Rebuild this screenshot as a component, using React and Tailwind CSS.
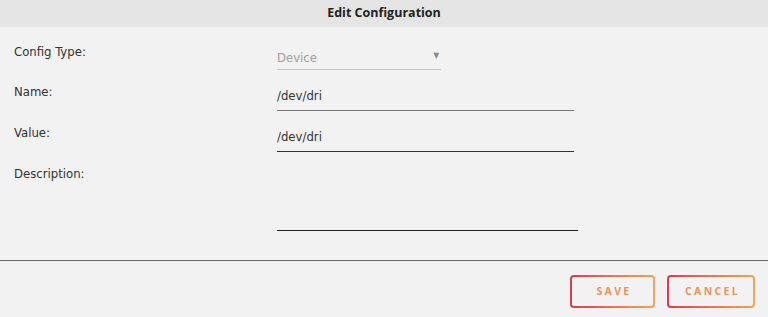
import React from "react";

const font = { fontFamily: '"Liberation Sans Narrow", "DejaVu Sans Condensed", "Roboto", sans-serif' };

function Row({ label, children, h }) {
  return (
    <div className={`flex ${h}`}>
      <div className="-mt-[1px] w-[277px] pl-[14px] text-[13px] text-[#333]">{label}</div>
      <div className="flex-1">{children}</div>
    </div>
  );
}

function Btn({ children, w }) {
  return (
    <div className={`rounded-[4px] bg-gradient-to-r from-[#d53c4c] to-[#f4a550] p-[2px] ${w} h-[33px]`}>
      <div className="flex h-full w-full items-center justify-center rounded-[2px] bg-[#f2f2f2] pl-[3px] text-[10.5px] font-bold tracking-[0.22em] text-[#eb9460]" style={{ fontFamily: '"Open Sans", sans-serif' }}>
        {children}
      </div>
    </div>
  );
}

export default function App() {
  return (
    <div className="h-[317px] w-[768px] bg-[#f2f2f2]" style={font}>
      <div className="flex h-[27px] items-center justify-center bg-[#e5e5e5] text-[12.5px] font-bold text-[#222]" style={{ fontFamily: '"Open Sans", sans-serif' }}>
        Edit Configuration
      </div>
      <div className="pt-[16px]">
        <Row label="Config Type:" h="h-[40px]">
          <div className="flex h-[27px] w-[164px] items-center justify-between border-b border-[#c8c8c8] pr-[2px] text-[13px] text-[#a0a0a0]">
            <span className="pt-[4px]">Device</span>
            <span className="text-[8px] text-[#888]">▼</span>
          </div>
        </Row>
        <Row label="Name:" h="h-[41px]">
          <div className="flex h-[28px] w-[297px] items-end border-b-[1.5px] border-[#777] pb-[5px] text-[13px] text-[#333]">/dev/dri</div>
        </Row>
        <Row label="Value:" h="h-[41px]">
          <div className="flex h-[28px] w-[297px] items-end border-b-[1.5px] border-[#333] pb-[5px] text-[13px] text-[#333]">/dev/dri</div>
        </Row>
        <Row label="Description:" h="h-[95px]">
          <div className="h-[66px] w-[301px] border-b border-[#222]"></div>
        </Row>
      </div>
      <div className="border-t-[1.5px] border-[#666]"></div>
      <div className="flex justify-end gap-[12px] pr-[13px] pt-[14px]">
        <Btn w="w-[85px]">SAVE</Btn>
        <Btn w="w-[88px]">CANCEL</Btn>
      </div>
    </div>
  );
}
